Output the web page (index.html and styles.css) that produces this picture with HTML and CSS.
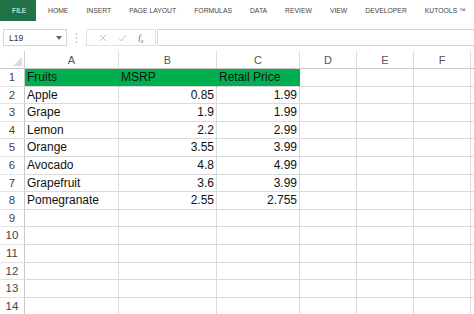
FILE: index.html
```html
<!DOCTYPE html>
<html>
<head>
    <title>Fruits - Excel</title>
    <link rel="stylesheet" href="styles.css">
</head>
<body>
    <div class="ribbon">
        <div class="tab file">FILE</div>
        <div class="tab">HOME</div>
        <div class="tab">INSERT</div>
        <div class="tab">PAGE LAYOUT</div>
        <div class="tab">FORMULAS</div>
        <div class="tab">DATA</div>
        <div class="tab">REVIEW</div>
        <div class="tab">VIEW</div>
        <div class="tab">DEVELOPER</div>
        <div class="tab">KUTOOLS &trade;</div>
    </div>

    <div class="formula-bar">
        <div class="name-box">
            <span>L19</span>
            <svg class="drop" width="6" height="4" viewBox="0 0 6 4"><path d="M0 0h6L3 4z" fill="#666"/></svg>
        </div>
        <div class="grip">
            <svg width="3" height="12" viewBox="0 0 3 12"><circle cx="1.5" cy="2" r="0.8" fill="#aaa"/><circle cx="1.5" cy="6" r="0.8" fill="#aaa"/><circle cx="1.5" cy="10" r="0.8" fill="#aaa"/></svg>
        </div>
        <div class="fx-box">
            <svg width="8" height="8" viewBox="0 0 8 8"><path d="M1 1l6 6M7 1L1 7" stroke="#c4c4c4" stroke-width="1"/></svg>
            <svg width="9" height="8" viewBox="0 0 9 8"><path d="M1 4.5l2.5 2.5L8 1" stroke="#c4c4c4" stroke-width="1" fill="none"/></svg>
            <span class="fx">f<sub>x</sub></span>
        </div>
        <div class="formula-input"></div>
    </div>

    <div class="sheet">
        <div class="corner"></div>
        <div class="col-head">A</div>
        <div class="col-head">B</div>
        <div class="col-head">C</div>
        <div class="col-head">D</div>
        <div class="col-head">E</div>
        <div class="col-head">F</div>
        <div class="col-head last"></div>

        <div class="row-head">1</div>
        <div class="cell hl">Fruits</div>
        <div class="cell hl">MSRP</div>
        <div class="cell hl">Retail Price</div>
        <div class="cell"></div><div class="cell"></div><div class="cell"></div><div class="cell"></div>

        <div class="row-head">2</div>
        <div class="cell">Apple</div><div class="cell num">0.85</div><div class="cell num">1.99</div>
        <div class="cell"></div><div class="cell"></div><div class="cell"></div><div class="cell"></div>

        <div class="row-head">3</div>
        <div class="cell">Grape</div><div class="cell num">1.9</div><div class="cell num">1.99</div>
        <div class="cell"></div><div class="cell"></div><div class="cell"></div><div class="cell"></div>

        <div class="row-head">4</div>
        <div class="cell">Lemon</div><div class="cell num">2.2</div><div class="cell num">2.99</div>
        <div class="cell"></div><div class="cell"></div><div class="cell"></div><div class="cell"></div>

        <div class="row-head">5</div>
        <div class="cell">Orange</div><div class="cell num">3.55</div><div class="cell num">3.99</div>
        <div class="cell"></div><div class="cell"></div><div class="cell"></div><div class="cell"></div>

        <div class="row-head">6</div>
        <div class="cell">Avocado</div><div class="cell num">4.8</div><div class="cell num">4.99</div>
        <div class="cell"></div><div class="cell"></div><div class="cell"></div><div class="cell"></div>

        <div class="row-head">7</div>
        <div class="cell">Grapefruit</div><div class="cell num">3.6</div><div class="cell num">3.99</div>
        <div class="cell"></div><div class="cell"></div><div class="cell"></div><div class="cell"></div>

        <div class="row-head">8</div>
        <div class="cell">Pomegranate</div><div class="cell num">2.55</div><div class="cell num">2.755</div>
        <div class="cell"></div><div class="cell"></div><div class="cell"></div><div class="cell"></div>

        <div class="row-head">9</div>
        <div class="cell"></div><div class="cell"></div><div class="cell"></div>
        <div class="cell"></div><div class="cell"></div><div class="cell"></div><div class="cell"></div>

        <div class="row-head">10</div>
        <div class="cell"></div><div class="cell"></div><div class="cell"></div>
        <div class="cell"></div><div class="cell"></div><div class="cell"></div><div class="cell"></div>

        <div class="row-head">11</div>
        <div class="cell"></div><div class="cell"></div><div class="cell"></div>
        <div class="cell"></div><div class="cell"></div><div class="cell"></div><div class="cell"></div>

        <div class="row-head">12</div>
        <div class="cell"></div><div class="cell"></div><div class="cell"></div>
        <div class="cell"></div><div class="cell"></div><div class="cell"></div><div class="cell"></div>

        <div class="row-head">13</div>
        <div class="cell"></div><div class="cell"></div><div class="cell"></div>
        <div class="cell"></div><div class="cell"></div><div class="cell"></div><div class="cell"></div>

        <div class="row-head">14</div>
        <div class="cell"></div><div class="cell"></div><div class="cell"></div>
        <div class="cell"></div><div class="cell"></div><div class="cell"></div><div class="cell"></div>
    </div>
</body>
</html>
```

FILE: styles.css
```css
body {
    margin: 0;
    background: #fff;
    font-family: "Liberation Sans", Arial, sans-serif;
    overflow: hidden;
}
.ribbon {
    display: flex;
    align-items: center;
    height: 21px;
}
.tab {
    flex-shrink: 0;
    font-size: 6.8px;
    color: #444;
    padding: 0 9px;
    white-space: nowrap;
}
.tab.file {
    background: #217346;
    color: #fff;
    height: 21px;
    line-height: 21px;
    width: 36px;
    box-sizing: border-box;
    padding: 0 0 0 12px;
    margin-right: 3px;
}
.formula-bar {
    display: flex;
    align-items: stretch;
    height: 17px;
    margin-top: 8px;
    padding-left: 3px;
}
.name-box {
    width: 64px;
    box-sizing: border-box;
    border: 1px solid #d6d6d6;
    display: flex;
    align-items: center;
    justify-content: space-between;
    padding: 0 4px 0 5px;
    font-size: 8.5px;
    color: #333;
}
.grip {
    width: 19px;
    display: flex;
    align-items: center;
    justify-content: center;
}
.fx-box {
    width: 70px;
    box-sizing: border-box;
    border: 1px solid #e0e0e0;
    display: flex;
    align-items: center;
    justify-content: space-around;
    padding: 0 6px;
}
.fx {
    font-family: "Liberation Serif", serif;
    font-style: italic;
    font-size: 9px;
    color: #666;
}
.fx sub {
    font-size: 6px;
}
.formula-input {
    flex: 1;
    border: 1px solid #d6d6d6;
    border-right: none;
    margin-left: 1px;
}
.sheet {
    display: grid;
    grid-template-columns: 25px 94px 98px 83px 57px 57px 57px 1fr;
    grid-template-rows: 18px;
    grid-auto-rows: 17.6px;
    margin-top: 5px;
}
.corner {
    position: relative;
    border-right: 1px solid #d0d0d0;
    border-bottom: 1px solid #c8c8c8;
}
.corner::after {
    content: "";
    position: absolute;
    right: 2px;
    bottom: 2px;
    border-style: solid;
    border-width: 0 0 9px 9px;
    border-color: transparent transparent #dcdcdc transparent;
}
.col-head {
    border-right: 1px solid #dcdcdc;
    border-bottom: 1px solid #c8c8c8;
    text-align: center;
    font-size: 11px;
    line-height: 18px;
    color: #555;
}
.col-head.last {
    border-right: none;
}
.row-head {
    border-right: 1px solid #c8c8c8;
    border-bottom: 1px solid #e2e2e2;
    text-align: center;
    font-size: 11.5px;
    line-height: 17px;
    color: #444;
}
.cell {
    border-right: 1px solid #dadada;
    border-bottom: 1px solid #dadada;
    font-size: 12px;
    line-height: 17px;
    padding: 0 2px;
    color: #111;
    white-space: nowrap;
    overflow: hidden;
}
.cell.num {
    text-align: right;
}
.cell.hl {
    background: #00b050;
    border-right-color: #00b050;
}
```
